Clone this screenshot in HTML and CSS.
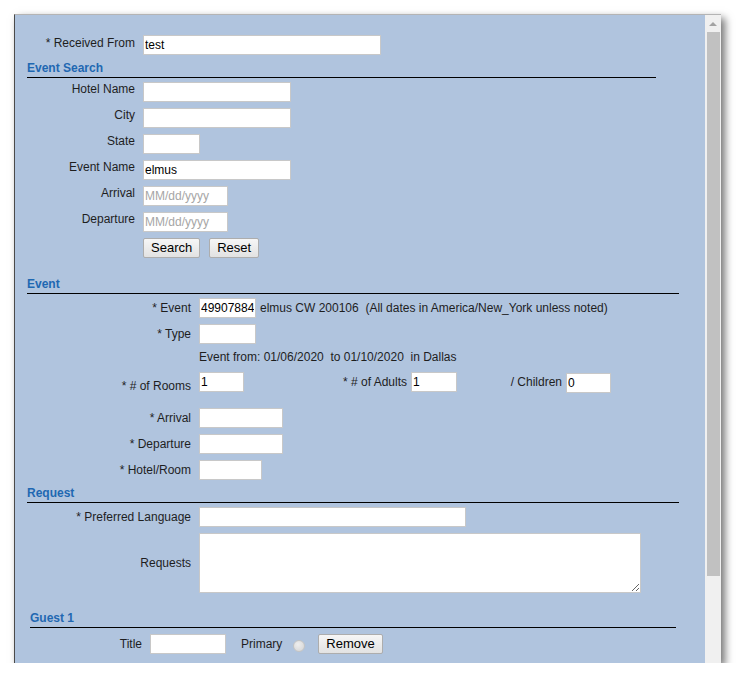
FILE: index.html
```html
<!DOCTYPE html>
<html>
<head>
<meta charset="utf-8">
<link rel="stylesheet" href="styles.css">
</head>
<body>
<div class="window">
  <div class="content">
    <div class="row first">
      <label class="lbl w-search">* Received From</label>
      <input class="in w238" type="text" value="test">
    </div>

    <div class="sec sec-search">Event Search</div>
    <div class="search">
      <div class="row"><label class="lbl w-search">Hotel Name</label><input class="in w148" type="text"></div>
      <div class="row"><label class="lbl w-search">City</label><input class="in w148" type="text"></div>
      <div class="row"><label class="lbl w-search">State</label><input class="in w57" type="text"></div>
      <div class="row"><label class="lbl w-search">Event Name</label><input class="in w148" type="text" value="elmus"></div>
      <div class="row"><label class="lbl w-search">Arrival</label><input class="in w85" type="text" placeholder="MM/dd/yyyy"></div>
      <div class="row"><label class="lbl w-search">Departure</label><input class="in w85" type="text" placeholder="MM/dd/yyyy"></div>
      <div class="row"><span class="lbl w-search"></span><button class="btn">Search</button><button class="btn btn-gap">Reset</button></div>
    </div>

    <div class="sec sec-event">Event</div>
    <div class="event">
      <div class="row"><label class="lbl w-event">* Event</label><input class="in w57" type="text" value="49907884"><span class="txt">elmus CW 200106&nbsp; (All dates in America/New_York unless noted)</span></div>
      <div class="row"><label class="lbl w-event">* Type</label><input class="in w57" type="text"></div>
      <div class="row info">Event from: 01/06/2020&nbsp; to 01/10/2020&nbsp; in Dallas</div>
      <div class="row rooms">
        <label class="lbl w-event lower">* # of Rooms</label>
        <input class="in w45" type="text" value="1">
        <label class="lbl w-adults mid">* # of Adults</label>
        <input class="in w46" type="text" value="1">
        <label class="lbl w-children mid">/ Children</label>
        <input class="in w45 drop" type="text" value="0">
      </div>
      <div class="row"><label class="lbl w-event">* Arrival</label><input class="in w84" type="text"></div>
      <div class="row"><label class="lbl w-event">* Departure</label><input class="in w84" type="text"></div>
      <div class="row"><label class="lbl w-event">* Hotel/Room</label><input class="in w63" type="text"></div>
    </div>

    <div class="sec sec-request">Request</div>
    <div class="event">
      <div class="row"><label class="lbl w-event">* Preferred Language</label><input class="in w267" type="text"></div>
      <div class="row tall"><label class="lbl w-event">Requests</label><textarea class="ta"></textarea></div>
    </div>

    <div class="sec sec-guest">Guest 1</div>
    <div class="event guest">
      <div class="row">
        <label class="lbl w-title">Title</label>
        <input class="in w76" type="text">
        <span class="primary">Primary</span>
        <span class="radio"></span>
        <button class="btn btn-remove">Remove</button>
      </div>
    </div>
  </div>
  <div class="scrollbar">
    <div class="arrow-btn"><span class="arrow"></span></div>
    <div class="thumb"></div>
  </div>
</div>
</body>
</html>
```

FILE: styles.css
```css
html, body {
  margin: 0;
  padding: 0;
  background: #ffffff;
}

body {
  padding: 14px 0 0 14px;
  font-family: "Liberation Sans", Arial, sans-serif;
  font-size: 12px;
  color: #1e1e1e;
}

.window {
  width: 707px;
  height: 649px;
  box-sizing: border-box;
  border-top: 1px solid #b4b4b4;
  border-left: 1px solid #4a4a4a;
  background: #b0c4de;
  display: flex;
  overflow: hidden;
  box-shadow: 4px 4px 8px rgba(0, 0, 0, 0.55);
}

.content {
  flex: 1;
  padding: 20px 0 0 12px;
}

.row {
  display: flex;
  align-items: flex-start;
  height: 20px;
  margin-top: 6px;
}

.row.first {
  margin-top: 0;
}

.lbl {
  flex: none;
  line-height: 14px;
  text-align: right;
  margin-right: 8px;
  white-space: nowrap;
}

.first .lbl {
  padding-top: 1px;
}

.w-search { width: 108px; }
.w-event { width: 164px; }
.w-title { width: 115px; }
.w-adults { width: 163px; margin-right: 4px; }
.w-children { width: 105px; margin-right: 4px; }

.event .row {
  align-items: center;
}

.in {
  flex: none;
  box-sizing: border-box;
  height: 20px;
  border: 1px solid #c8c8c8;
  padding: 0 1px;
  margin: 0;
  background: #ffffff;
  font-family: "Liberation Sans", Arial, sans-serif;
  font-size: 12px;
  color: #000000;
  outline: none;
}

.in::placeholder {
  color: #a6a6a6;
}

.w238 { width: 238px; }
.w148 { width: 148px; }
.w57 { width: 57px; }
.w85 { width: 85px; }
.w84 { width: 84px; }
.w45 { width: 45px; }
.w46 { width: 46px; }
.w63 { width: 63px; }
.w76 { width: 76px; }
.w267 { width: 267px; }

.sec {
  line-height: 17px;
  font-weight: bold;
  color: #1f68b2;
  border-bottom: 1px solid #000000;
}

.sec-search { margin-top: 5px; width: 629px; }
.sec-event { margin-top: 18px; width: 652px; }
.sec-request { margin-top: 5px; width: 652px; }
.sec-guest { margin-top: 17px; width: 646px; margin-left: 3px; }

.search .row:first-child,
.event .row:first-child {
  margin-top: 4px;
}

.event.guest .row:first-child {
  margin-top: 6px;
}

.btn {
  flex: none;
  box-sizing: border-box;
  height: 20px;
  padding: 0 7px;
  margin: 0;
  border: 1px solid #adadad;
  border-radius: 2px;
  background: linear-gradient(#f6f6f6, #e2e2e2);
  font-family: "Liberation Sans", Arial, sans-serif;
  font-size: 13px;
  color: #000000;
  line-height: 18px;
}

.btn-gap {
  margin-left: 9px;
}

.txt {
  margin-left: 4px;
  line-height: 14px;
  white-space: pre;
}

.row.info {
  height: 16px;
  line-height: 14px;
  padding-left: 172px;
  align-items: flex-start;
}

.event .row.rooms {
  height: 30px;
  align-items: flex-start;
}

.lbl.lower { padding-top: 7px; }
.lbl.mid { padding-top: 3px; }
.in.drop { margin-top: 1px; }

.event .row.tall {
  height: 60px;
}

.ta {
  flex: none;
  box-sizing: border-box;
  width: 442px;
  height: 60px;
  margin: 0;
  border: 1px solid #c8c8c8;
  background: #ffffff;
  font-family: "Liberation Sans", Arial, sans-serif;
  font-size: 12px;
  outline: none;
}

.primary {
  margin-left: 15px;
  line-height: 14px;
}

.radio {
  flex: none;
  box-sizing: border-box;
  width: 12px;
  height: 12px;
  margin-left: 11px;
  margin-top: 4px;
  border: 1px solid #c4c4c4;
  border-radius: 50%;
  background: radial-gradient(circle at 40% 35%, #eeeeee, #d4d4d4);
}

.btn-remove {
  margin-left: 13px;
}

.scrollbar {
  flex: none;
  width: 16px;
  background: #f0f0f0;
  display: flex;
  flex-direction: column;
}

.arrow-btn {
  height: 17px;
  display: flex;
  justify-content: center;
  padding-top: 7px;
  box-sizing: border-box;
}

.arrow {
  width: 0;
  height: 0;
  border-left: 4px solid transparent;
  border-right: 4px solid transparent;
  border-bottom: 4px solid #a3a3a3;
}

.thumb {
  width: 13px;
  height: 544px;
  margin-left: 2px;
  background: #c1c1c1;
}
```
